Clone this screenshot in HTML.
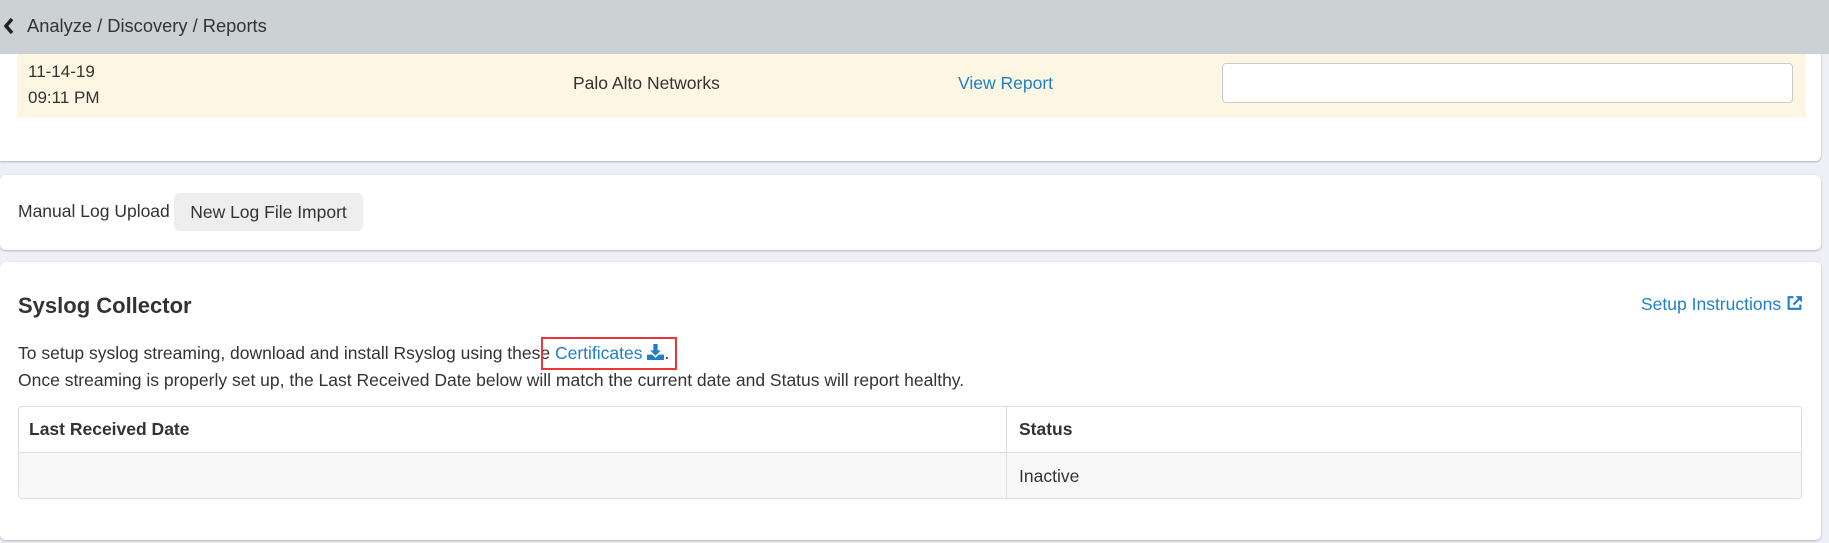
<!DOCTYPE html>
<html><head><meta charset="utf-8"><style>
*{box-sizing:border-box;margin:0;padding:0}
html{width:1829px;height:543px;overflow:hidden}
body{width:1829px;height:543px;overflow:hidden;background:#efeff6;font-family:"Liberation Sans",Arial,sans-serif;color:#333;font-size:17.5px;position:relative}
.a{position:absolute;white-space:nowrap}
.hdr{position:absolute;left:0;top:0;width:1829px;height:54px;background:#ccd1d4;z-index:5}
.card{position:absolute;left:0;width:1821px;background:#fff;border-radius:0 0 6px 0;box-shadow:0 1px 2px rgba(0,0,0,.25)}
.link{color:#1f7fc8}
</style></head><body>
<div class="hdr">
 <svg class="a" style="left:2px;top:16px" width="13" height="20" viewBox="0 0 13 20"><path d="M10 3 L4 10 L10 17" stroke="#222" stroke-width="3.5" fill="none"/></svg>
 <div class="a" style="left:27px;top:15px;font-size:18.3px;color:#333">Analyze / Discovery / Reports</div>
</div>
<div class="card" style="top:40px;height:121px">
 <div class="a" style="left:17px;top:14px;width:1789px;height:64px;background:#fdf6e3"></div>
 <div class="a" style="left:28px;top:19px;line-height:26px;font-size:17px">11-14-19<br>09:11 PM</div>
 <div class="a" style="left:573px;top:33px">Palo Alto Networks</div>
 <div class="a link" style="left:958px;top:33px">View Report</div>
 <div class="a" style="left:1222px;top:23px;width:571px;height:40px;background:#fff;border:1px solid #ccc;border-radius:4px"></div>
</div>
<div class="card" style="top:175px;height:75px;border-radius:6px">
 <div class="a" style="left:18px;top:26px">Manual Log Upload</div>
 <div class="a" style="left:174px;top:18px;width:189px;height:38px;background:#eee;border-radius:6px;font-size:17.5px;line-height:38px;text-align:center">New Log File Import</div>
</div>
<div class="card" style="top:262px;height:278px;border-radius:6px">
 <div class="a" style="left:18px;top:31px;font-size:22px;font-weight:bold">Syslog Collector</div>
 <div class="a link" style="left:1641px;top:32px">Setup Instructions
  <svg style="vertical-align:-1px" width="17" height="16" viewBox="0 0 16 15"><path d="M7 2H2.5v11h11V9" stroke="#1f7fc8" stroke-width="2" fill="none"/><path d="M9 1h6v6z" fill="#1f7fc8"/><path d="M14 2L7 9" stroke="#1f7fc8" stroke-width="2"/></svg></div>
 <div class="a" style="left:18px;top:81px">To setup syslog streaming, download and install Rsyslog using these <span class="link">Certificates <svg style="vertical-align:-1px" width="17" height="16" viewBox="0 0 16 15"><path d="M6 0h4v6h3l-5 5-5-5h3z" fill="#1f7fc8"/><path d="M0 10h5l3 3 3-3h5v5H0z" fill="#1f7fc8"/></svg></span>.</div>
 <div class="a" style="left:541px;top:75px;width:136px;height:33px;border:2px solid #e8383d"></div>
 <div class="a" style="left:18px;top:108px">Once streaming is properly set up, the Last Received Date below will match the current date and Status will report healthy.</div>
 <div class="a" style="left:18px;top:144px;width:1784px;height:93px;border:1px solid #ddd;border-radius:4px;overflow:hidden">
  <div class="a" style="left:0;top:45px;width:1784px;height:47px;background:#f8f8f8;border-top:1px solid #ddd"></div>
  <div class="a" style="left:987px;top:0;width:1px;height:93px;background:#ddd"></div>
  <div class="a" style="left:10px;top:12px;font-weight:bold">Last Received Date</div>
  <div class="a" style="left:1000px;top:12px;font-weight:bold">Status</div>
  <div class="a" style="left:1000px;top:59px">Inactive</div>
 </div>
</div>
</body></html>
